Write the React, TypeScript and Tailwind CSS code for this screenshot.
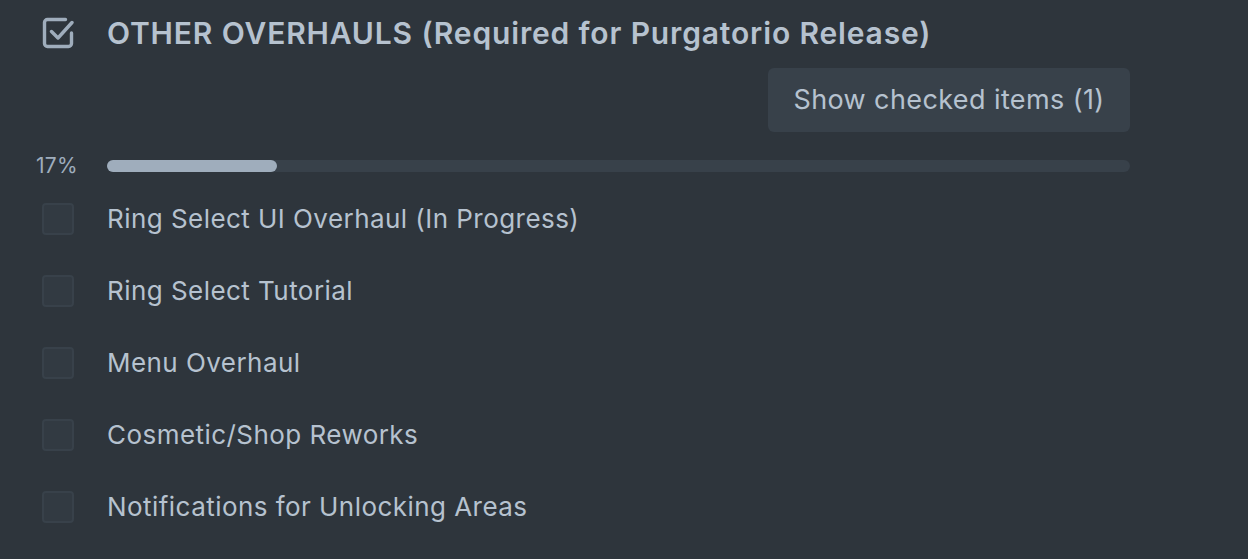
const items = [
  'Ring Select UI Overhaul (In Progress)',
  'Ring Select Tutorial',
  'Menu Overhaul',
  'Cosmetic/Shop Reworks',
  'Notifications for Unlocking Areas',
];

function CheckSquareIcon() {
  return (
    <svg viewBox="0 0 32 32" className="h-8 w-8" fill="none" stroke="#9fadbc" strokeWidth="3.4" strokeLinecap="round" strokeLinejoin="round">
      <path d="M29.5 16v10.5a3 3 0 0 1-3 3h-21a3 3 0 0 1-3-3v-21a3 3 0 0 1 3-3h18" />
      <path d="M9.5 14.5l6.5 6.5L30 5.5" />
    </svg>
  );
}

export default function App() {
  const percent = 17;
  return (
    <main className="min-h-[559px] w-full bg-[#2e353c] text-[#b6c2cf] font-['Inter','Liberation_Sans',sans-serif]">
      <div className="w-[1130px] pt-[17px]">
        <div className="flex items-center">
          <div className="flex w-[107px] justify-start pl-[42px]">
            <CheckSquareIcon />
          </div>
          <h2 className="text-[30px] font-semibold leading-8 tracking-[0.85px]">
            OTHER OVERHAULS (Required for Purgatorio Release)
          </h2>
        </div>

        <div className="mt-[19px] flex justify-end">
          <button className="h-16 w-[362px] rounded-[6px] bg-[#38414a] text-[27px] tracking-[0.4px] text-[#b6c2cf]">
            Show checked items (1)
          </button>
        </div>

        <div className="mt-[24px] flex items-center">
          <span className="w-[107px] pl-[36px] text-[21px] leading-5 tracking-[0.3px] text-[#9fadbc]">{percent}%</span>
          <div className="h-3 flex-1 rounded-full bg-[#38414a]">
            <div className="h-3 rounded-full bg-[#9fadbc]" style={{ width: `${percent - 0.4}%` }} />
          </div>
        </div>

        <ul className="mt-[7px]">
          {items.map((item) => (
            <li key={item} className="flex h-[72px] items-center">
              <div className="w-[107px] pl-[42px]">
                <div className="h-8 w-8 rounded-[4px] border-2 border-[#38414a] bg-[#323a42]" />
              </div>
              <span className="text-[26px] leading-8 tracking-[0.45px]">{item}</span>
            </li>
          ))}
        </ul>
      </div>
    </main>
  );
}
